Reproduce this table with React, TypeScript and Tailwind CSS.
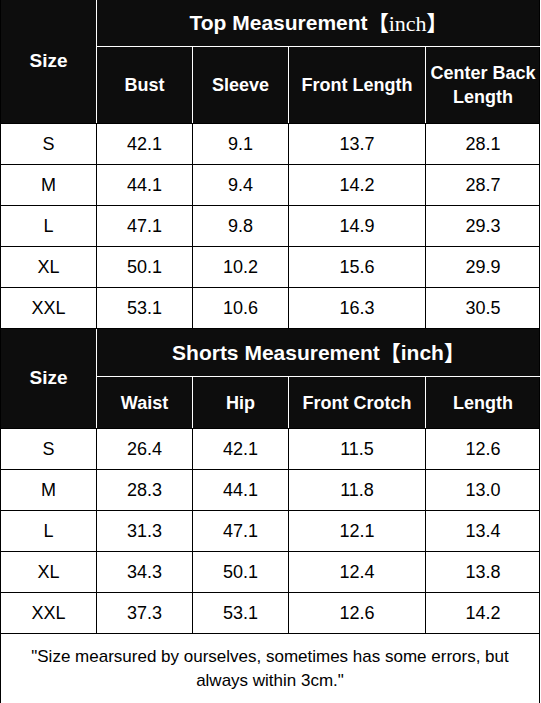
import React from "react";

type Table = {
  title: string;
  serifUnit?: boolean;
  cols: string[];
  headH: string;
  titleH: string;
  rows: string[][];
};

const tables: Table[] = [
  {
    title: "Top Measurement",
    serifUnit: true,
    cols: ["Bust", "Sleeve", "Front Length", "Center Back Length"],
    titleH: "h-[47px]",
    headH: "h-[76px]",
    rows: [
      ["S", "42.1", "9.1", "13.7", "28.1"],
      ["M", "44.1", "9.4", "14.2", "28.7"],
      ["L", "47.1", "9.8", "14.9", "29.3"],
      ["XL", "50.1", "10.2", "15.6", "29.9"],
      ["XXL", "53.1", "10.6", "16.3", "30.5"],
    ],
  },
  {
    title: "Shorts Measurement",
    cols: ["Waist", "Hip", "Front Crotch", "Length"],
    titleH: "h-[48px]",
    headH: "h-[51px]",
    rows: [
      ["S", "26.4", "42.1", "11.5", "12.6"],
      ["M", "28.3", "44.1", "11.8", "13.0"],
      ["L", "31.3", "47.1", "12.1", "13.4"],
      ["XL", "34.3", "50.1", "12.4", "13.8"],
      ["XXL", "37.3", "53.1", "12.6", "14.2"],
    ],
  },
];

const grid = "grid grid-cols-[96px_96px_96px_137px_114px]";
const cjk = "font-['Noto_Sans_CJK_SC',sans-serif] font-black";

function SizeTable({ t }: { t: Table }) {
  return (
    <div>
      {/* 表头 */}
      <div className={`${grid} bg-[#0d0d0d] font-bold text-white border-b border-black`}>
        <div className="row-span-2 flex items-center justify-center border-r border-white text-[19px]">
          Size
        </div>
        <div className={`col-span-4 ${t.titleH} flex items-center justify-center border-b border-white text-[21px]`}>
          <span>{t.title}</span>
          <span className="flex items-center">
            <span className={cjk}>【</span>
            {t.serifUnit ? (
              <span className="font-['Liberation_Serif',serif] font-normal text-[22px]">inch</span>
            ) : (
              <span>inch</span>
            )}
            <span className={cjk}>】</span>
          </span>
        </div>
        {t.cols.map((c, i) => (
          <div
            key={c}
            className={`${t.headH} flex items-center justify-center text-center leading-[24px] text-[18px] ${
              i < 3 ? "border-r border-white" : ""
            }`}
          >
            {c}
          </div>
        ))}
      </div>
      {/* 数据行 */}
      {t.rows.map((r) => (
        <div key={r[0]} className={`${grid} h-[41px] border-b border-black text-[18px] text-black`}>
          {r.map((v, i) => (
            <div
              key={i}
              className={`flex items-center justify-center ${i < 4 ? "border-r border-black" : ""}`}
            >
              {v}
            </div>
          ))}
        </div>
      ))}
    </div>
  );
}

export default function App() {
  return (
    <div className="w-[541px] h-[703px] bg-white font-['Liberation_Sans',Arial,sans-serif]">
      <div className="w-[540px] border-l border-r border-black">
        {tables.map((t) => (
          <SizeTable key={t.title} t={t} />
        ))}
        <div className="h-[70px] border-b border-black flex items-center justify-center text-center text-[17px] leading-[24px] text-black px-3">
          "Size mearsured by ourselves, sometimes has some errors, but always within 3cm."
        </div>
      </div>
    </div>
  );
}
